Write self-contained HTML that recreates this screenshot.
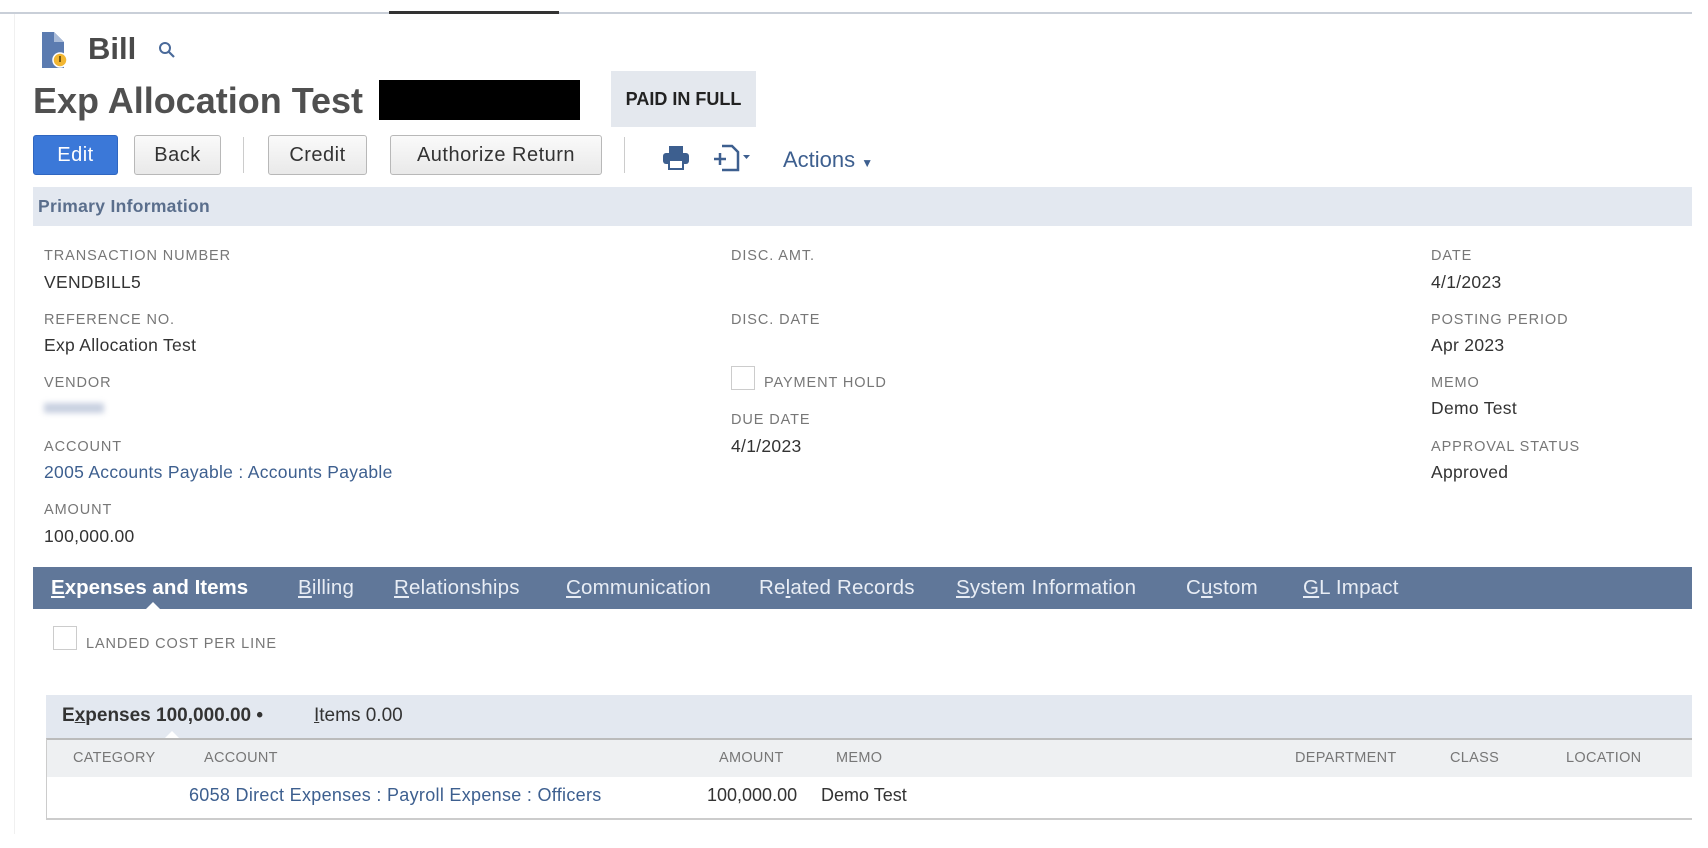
<!DOCTYPE html>
<html><head><meta charset="utf-8"><style>
*{margin:0;padding:0;box-sizing:border-box}
body{width:1708px;height:848px;background:#fff;font-family:"Liberation Sans",sans-serif;position:relative;overflow:hidden;color:#333}
.a{position:absolute;white-space:nowrap}
.lbl{font-size:14.5px;color:#777;text-transform:uppercase;letter-spacing:0.9px}
.val{font-size:17.5px;color:#333;letter-spacing:0.3px}
.lnk{color:#3d5f8f}
.btn{position:absolute;top:135px;height:40px;border:1px solid #b8b8b8;border-radius:3px;background:linear-gradient(#fafafa,#e9e9e9);font-size:20px;letter-spacing:0.5px;color:#333;text-align:center;line-height:38px}
.tab{position:absolute;top:576px;font-size:20.5px;color:#e8edf5;letter-spacing:0.2px}
.th{position:absolute;top:750px;font-size:14.5px;color:#777;letter-spacing:0.3px}
</style></head><body>
<div class="a" style="left:0;top:12px;width:1692px;height:2px;background:#c9cfd8"></div>
<div class="a" style="left:389px;top:11px;width:170px;height:3px;background:#333"></div>
<div class="a" style="left:14px;top:14px;width:1px;height:820px;background:#f0f0f0"></div>

<svg class="a" style="left:40px;top:30px" width="30" height="40" viewBox="0 0 30 40">
<path d="M2 2h12l10 10v26H2z" fill="#5b7bb0"/><path d="M14 2v10h10z" fill="#a9bbd8"/>
<circle cx="20" cy="30" r="7" fill="#f2b632" stroke="#fff" stroke-width="1.5"/><rect x="19" y="26" width="2" height="6" fill="#7a5a10"/>
</svg>
<div class="a" style="left:88px;top:31px;font-size:31px;font-weight:bold;color:#4a4a4a">Bill</div>
<svg class="a" style="left:158px;top:41px" width="18" height="18" viewBox="0 0 18 18"><circle cx="7" cy="7" r="5" fill="none" stroke="#4a6a9a" stroke-width="2"/><path d="M11 11l5 5" stroke="#4a6a9a" stroke-width="2.2"/></svg>

<div class="a" style="left:33px;top:80px;font-size:36px;font-weight:bold;color:#505050">Exp Allocation Test</div>
<div class="a" style="left:379px;top:80px;width:201px;height:40px;background:#000"></div>
<div class="a" style="left:611px;top:71px;width:145px;height:56px;background:#e4e8ee;font-size:18px;font-weight:bold;color:#222;text-align:center;line-height:56px">PAID IN FULL</div>

<div class="btn" style="left:33px;width:85px;background:#3b78d8;border-color:#2f66c0;color:#fff">Edit</div>
<div class="btn" style="left:134px;width:87px">Back</div>
<div class="a" style="left:243px;top:137px;width:1px;height:36px;background:#ccc"></div>
<div class="btn" style="left:268px;width:99px">Credit</div>
<div class="btn" style="left:390px;width:212px">Authorize Return</div>
<div class="a" style="left:624px;top:137px;width:1px;height:36px;background:#ccc"></div>
<svg class="a" style="left:662px;top:145px" width="28" height="26" viewBox="0 0 28 26"><rect x="7" y="1" width="14" height="7" fill="#3d5f8f"/><rect x="1" y="8" width="26" height="11" rx="3" fill="#3d5f8f"/><rect x="7" y="15" width="14" height="9" fill="#fff" stroke="#3d5f8f" stroke-width="2"/></svg>
<svg class="a" style="left:712px;top:143px" width="40" height="30" viewBox="0 0 40 30"><path d="M10 3h10l6 6v18H10" fill="none" stroke="#3d5f8f" stroke-width="2.5"/><path d="M2 16h12M8 10v12" stroke="#3d5f8f" stroke-width="2.5"/><path d="M31 12h7l-3.5 4z" fill="#3d5f8f"/></svg>
<div class="a" style="left:783px;top:147px;font-size:22px;color:#3d5f8f">Actions <span style="font-size:12px">▼</span></div>

<div class="a" style="left:33px;top:187px;width:1659px;height:39px;background:#e3e8f0"></div>
<div class="a" style="left:38px;top:196px;font-size:17.5px;font-weight:bold;color:#5a6e8c;letter-spacing:0.3px">Primary Information</div>

<div class="a lbl" style="left:44px;top:248px">Transaction Number</div>
<div class="a val" style="left:44px;top:272px">VENDBILL5</div>
<div class="a lbl" style="left:44px;top:312px">Reference No.</div>
<div class="a val" style="left:44px;top:335px">Exp Allocation Test</div>
<div class="a lbl" style="left:44px;top:375px">Vendor</div>
<div class="a" style="left:44px;top:403px;width:60px;height:10px;background:#c8d0e0;filter:blur(3px)"></div>
<div class="a lbl" style="left:44px;top:439px">Account</div>
<div class="a val lnk" style="left:44px;top:462px">2005 Accounts Payable : Accounts Payable</div>
<div class="a lbl" style="left:44px;top:502px">Amount</div>
<div class="a val" style="left:44px;top:526px">100,000.00</div>

<div class="a lbl" style="left:731px;top:248px">Disc. Amt.</div>
<div class="a lbl" style="left:731px;top:312px">Disc. Date</div>
<div class="a" style="left:731px;top:366px;width:24px;height:24px;border:1px solid #ccc"></div>
<div class="a lbl" style="left:764px;top:375px">Payment Hold</div>
<div class="a lbl" style="left:731px;top:412px">Due Date</div>
<div class="a val" style="left:731px;top:436px">4/1/2023</div>

<div class="a lbl" style="left:1431px;top:248px">Date</div>
<div class="a val" style="left:1431px;top:272px">4/1/2023</div>
<div class="a lbl" style="left:1431px;top:312px">Posting Period</div>
<div class="a val" style="left:1431px;top:335px">Apr 2023</div>
<div class="a lbl" style="left:1431px;top:375px">Memo</div>
<div class="a val" style="left:1431px;top:398px">Demo Test</div>
<div class="a lbl" style="left:1431px;top:439px">Approval Status</div>
<div class="a val" style="left:1431px;top:462px">Approved</div>

<div class="a" style="left:33px;top:567px;width:1659px;height:42px;background:#607799"></div>
<div class="tab" style="left:51px;font-weight:bold;color:#fff;letter-spacing:0"><u>E</u>xpenses and Items</div>
<div class="a" style="left:146px;top:602px;width:0;height:0;border-left:7px solid transparent;border-right:7px solid transparent;border-bottom:7px solid #fff"></div>
<div class="tab" style="left:298px"><u>B</u>illing</div>
<div class="tab" style="left:394px"><u>R</u>elationships</div>
<div class="tab" style="left:566px"><u>C</u>ommunication</div>
<div class="tab" style="left:759px">Re<u>l</u>ated Records</div>
<div class="tab" style="left:956px"><u>S</u>ystem Information</div>
<div class="tab" style="left:1186px">C<u>u</u>stom</div>
<div class="tab" style="left:1303px"><u>G</u>L Impact</div>

<div class="a" style="left:53px;top:626px;width:24px;height:24px;border:1px solid #ccc"></div>
<div class="a lbl" style="left:86px;top:636px">Landed Cost Per Line</div>

<div class="a" style="left:46px;top:695px;width:1646px;height:43px;background:#e3e8f0"></div>
<div class="a" style="left:62px;top:705px;font-size:19px;font-weight:bold;color:#333"><span>E<u>x</u>penses 100,000.00 •</span></div>
<div class="a" style="left:314px;top:705px;font-size:19px;color:#333"><u>I</u>tems 0.00</div>
<div class="a" style="left:165px;top:731px;width:0;height:0;border-left:7px solid transparent;border-right:7px solid transparent;border-bottom:7px solid #fff"></div>

<div class="a" style="left:46px;top:738px;width:1646px;height:82px;border-left:1px solid #ccc;border-top:2px solid #bbb;border-bottom:2px solid #ccc"></div>
<div class="a" style="left:47px;top:740px;width:1645px;height:37px;background:#eef0f2"></div>
<div class="th" style="left:73px">CATEGORY</div>
<div class="th" style="left:204px">ACCOUNT</div>
<div class="th" style="left:719px">AMOUNT</div>
<div class="th" style="left:836px">MEMO</div>
<div class="th" style="left:1295px">DEPARTMENT</div>
<div class="th" style="left:1450px">CLASS</div>
<div class="th" style="left:1566px">LOCATION</div>
<div class="a lnk" style="left:189px;top:785px;font-size:18px;letter-spacing:0.3px">6058 Direct Expenses : Payroll Expense : Officers</div>
<div class="a" style="left:707px;top:785px;font-size:18px">100,000.00</div>
<div class="a" style="left:821px;top:785px;font-size:18px">Demo Test</div>
</body></html>
